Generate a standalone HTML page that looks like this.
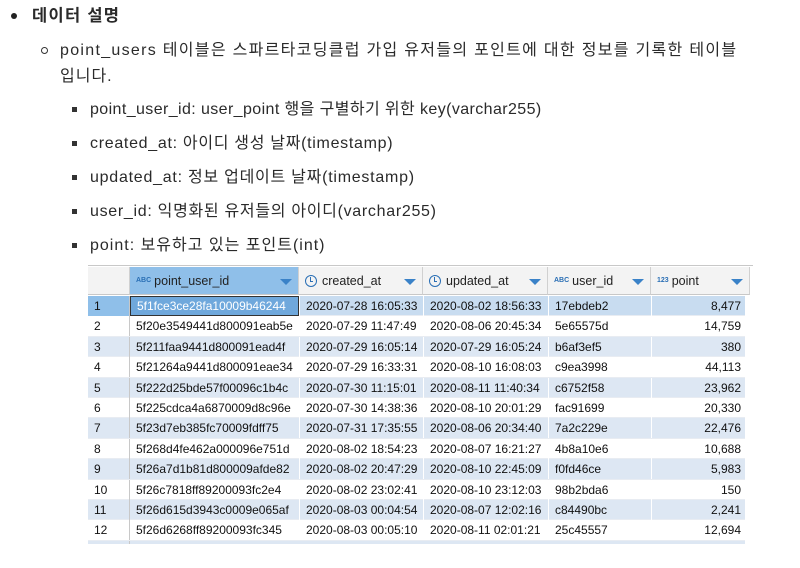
<!DOCTYPE html>
<html><head><meta charset="utf-8">
<style>
*{margin:0;padding:0;box-sizing:border-box}
body{width:800px;height:568px;background:#fff;position:relative;overflow:hidden;font-family:"Liberation Sans","Noto Sans CJK KR",sans-serif;color:#2a2a2a}
.t{position:absolute;font-size:16px;white-space:nowrap;line-height:20px}
.b1{position:absolute;left:11px;top:13px;width:6px;height:6px;border-radius:50%;background:#222}
.b2{position:absolute;left:41px;top:47px;width:7px;height:7px;border-radius:50%;border:1px solid #333}
.b3{position:absolute;left:72px;width:5px;height:5px;background:#333}
#tbl{position:absolute;left:88px;top:265px;width:665px;height:277px;background:#fff;border-top:1px solid #c8c8c8;font-family:"Liberation Sans",sans-serif;font-size:12px;color:#111}
.hd{position:absolute;top:1px;height:28px;background:#f3f3f3;border-right:1px solid #d0d0d0;border-bottom:1px solid #c8c8c8;line-height:28px;padding-left:6px;font-size:12.5px;color:#222}
.hd.sel{background:#8fbfe9}
.arr{position:absolute;right:6px;top:12px;width:0;height:0;border-left:6px solid transparent;border-right:6px solid transparent;border-top:6px solid #3a82c8}
.clk{display:inline-block;width:12px;height:12px;border:1.5px solid #2a6fb5;border-radius:50%;vertical-align:-2px;margin-right:5px;position:relative}
.clk:after{content:"";position:absolute;left:3.5px;top:1px;width:2px;height:4px;border-left:1.5px solid #2a6fb5;border-bottom:1.5px solid #2a6fb5}
.ic{font-size:7px;color:#2a6fb5;font-weight:bold;vertical-align:3px;margin-right:3px}
.row{position:absolute;left:0;width:657px;height:20.4px;line-height:20px;border-bottom:1px solid #e8ecf2}
.row.a{background:#dde7f3}
.row.s{background:#c8dcf0}
.c{position:absolute;top:0;height:20px;padding-left:6px;overflow:hidden;white-space:nowrap}
.rn{left:0;width:42px;border-right:1px solid #c8c8c8;padding-left:6px}
</style></head><body>
<div class="b1"></div>
<div class="t" style="left:32px;top:6px;font-weight:bold;font-size:16.5px;letter-spacing:1.3px">데이터 설명</div>
<div class="b2"></div>
<div class="t" style="left:60px;top:41px;letter-spacing:1.3px">point_users 테이블은 스파르타코딩클럽 가입 유저들의 포인트에 대한 정보를 기록한 테이블</div>
<div class="t" style="left:60px;top:67px;letter-spacing:1px">입니다.</div>
<div class="b3" style="top:107px"></div>
<div class="t" style="left:90px;top:100px;letter-spacing:0.4px">point_user_id: user_point 행을 구별하기 위한 key(varchar255)</div>
<div class="b3" style="top:141px"></div>
<div class="t" style="left:90px;top:134px;letter-spacing:0.7px">created_at: 아이디 생성 날짜(timestamp)</div>
<div class="b3" style="top:175px"></div>
<div class="t" style="left:90px;top:168px;letter-spacing:0.75px">updated_at: 정보 업데이트 날짜(timestamp)</div>
<div class="b3" style="top:209px"></div>
<div class="t" style="left:90px;top:202px;letter-spacing:0.7px">user_id: 익명화된 유저들의 아이디(varchar255)</div>
<div class="b3" style="top:243px"></div>
<div class="t" style="left:90px;top:236px;letter-spacing:1px">point: 보유하고 있는 포인트(int)</div>

<div id="tbl">
<div class="hd" style="left:0;width:42px"></div>
<div class="hd sel" style="left:42px;width:169px;padding-left:6px"><span class="ic">ABC</span>point_user_id<span class="arr"></span></div>
<div class="hd" style="left:211px;width:124px"><span class="clk"></span>created_at<span class="arr"></span></div>
<div class="hd" style="left:335px;width:125px"><span class="clk"></span>updated_at<span class="arr"></span></div>
<div class="hd" style="left:460px;width:103px"><span class="ic">ABC</span>user_id<span class="arr"></span></div>
<div class="hd" style="left:563px;width:99px"><span class="ic">123</span>point<span class="arr"></span></div>
<div id="rows"></div>
</div>
<script>
var d=[["5f1fce3ce28fa10009b46244","2020-07-28 16:05:33","2020-08-02 18:56:33","17ebdeb2","8,477"],
["5f20e3549441d800091eab5e","2020-07-29 11:47:49","2020-08-06 20:45:34","5e65575d","14,759"],
["5f211faa9441d800091ead4f","2020-07-29 16:05:14","2020-07-29 16:05:24","b6af3ef5","380"],
["5f21264a9441d800091eae34","2020-07-29 16:33:31","2020-08-10 16:08:03","c9ea3998","44,113"],
["5f222d25bde57f00096c1b4c","2020-07-30 11:15:01","2020-08-11 11:40:34","c6752f58","23,962"],
["5f225cdca4a6870009d8c96e","2020-07-30 14:38:36","2020-08-10 20:01:29","fac91699","20,330"],
["5f23d7eb385fc70009fdff75","2020-07-31 17:35:55","2020-08-06 20:34:40","7a2c229e","22,476"],
["5f268d4fe462a000096e751d","2020-08-02 18:54:23","2020-08-07 16:21:27","4b8a10e6","10,688"],
["5f26a7d1b81d800009afde82","2020-08-02 20:47:29","2020-08-10 22:45:09","f0fd46ce","5,983"],
["5f26c7818ff89200093fc2e4","2020-08-02 23:02:41","2020-08-10 23:12:03","98b2bda6","150"],
["5f26d615d3943c0009e065af","2020-08-03 00:04:54","2020-08-07 12:02:16","c84490bc","2,241"],
["5f26d6268ff89200093fc345","2020-08-03 00:05:10","2020-08-11 02:01:21","25c45557","12,694"]];
var h="";
for(var i=0;i<12;i++){var r=d[i];var cls=i==0?"s":(i%2==0?"a":"");
h+='<div class="row '+cls+'" style="top:'+(30+i*20.4)+'px">'+
'<div class="c rn" style="'+(i==0?'background:#8fbfe9':'')+'">'+(i+1)+'</div>'+
'<div class="c" style="left:42px;width:169px;'+(i==0?'border:1px solid #333;background:#6fa8dc;color:#fff;line-height:18px':'')+'">'+r[0]+'</div>'+
'<div class="c" style="left:211px;width:124px;border-left:1px solid #fff">'+r[1]+'</div>'+
'<div class="c" style="left:335px;width:125px;border-left:1px solid #fff">'+r[2]+'</div>'+
'<div class="c" style="left:460px;width:103px;border-left:1px solid #fff">'+r[3]+'</div>'+
'<div class="c" style="left:563px;width:94px;text-align:right;padding-right:4px;border-left:1px solid #fff">'+r[4]+'</div></div>';}
h+='<div class="row a" style="top:'+(30+12*20.4)+'px;height:3px;border:0"><div class="c rn" style="height:3px"></div></div>';
document.getElementById("rows").innerHTML=h;
</script>
</body></html>
